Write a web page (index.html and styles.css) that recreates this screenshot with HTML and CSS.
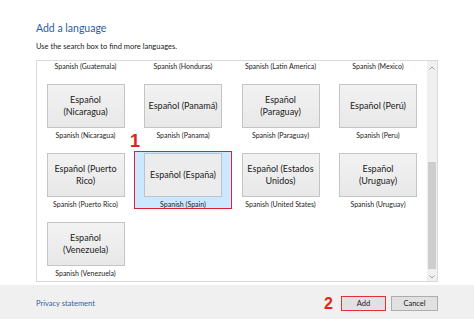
FILE: index.html
```html
<!DOCTYPE html>
<html>
<head>
<meta charset="utf-8">
<link rel="stylesheet" href="styles.css">
</head>
<body>
<div class="dialog">
  <header class="head">
    <h1 class="title">Add a language</h1>
    <p class="hint">Use the search box to find more languages.</p>
  </header>
  <div class="listbox">
    <div class="list">
      <div class="grid">
        <div class="cell prev"><span class="label">Spanish (Guatemala)</span></div>
        <div class="cell prev"><span class="label">Spanish (Honduras)</span></div>
        <div class="cell prev"><span class="label">Spanish (Latin America)</span></div>
        <div class="cell prev"><span class="label">Spanish (Mexico)</span></div>

        <div class="cell"><div class="tile">Español<br>(Nicaragua)</div><span class="label">Spanish (Nicaragua)</span></div>
        <div class="cell"><div class="tile">Español (Panamá)</div><span class="label">Spanish (Panama)</span></div>
        <div class="cell"><div class="tile">Español<br>(Paraguay)</div><span class="label">Spanish (Paraguay)</span></div>
        <div class="cell"><div class="tile">Español (Perú)</div><span class="label">Spanish (Peru)</span></div>

        <div class="cell"><div class="tile">Español (Puerto<br>Rico)</div><span class="label">Spanish (Puerto Rico)</span></div>
        <div class="cell selected"><div class="tile">Español (España)</div><span class="label">Spanish (Spain)</span></div>
        <div class="cell"><div class="tile">Español (Estados<br>Unidos)</div><span class="label">Spanish (United States)</span></div>
        <div class="cell"><div class="tile">Español<br>(Uruguay)</div><span class="label">Spanish (Uruguay)</span></div>

        <div class="cell"><div class="tile">Español<br>(Venezuela)</div><span class="label">Spanish (Venezuela)</span></div>
      </div>
      <span class="mark mark-one">1</span>
    </div>
    <div class="scrollbar">
      <span class="arrow">
        <svg width="6" height="4" viewBox="0 0 6 4"><path d="M0.5 3.5 L3 1 L5.5 3.5" fill="none" stroke="#a0a0a0" stroke-width="1"/></svg>
      </span>
      <div class="track"><div class="thumb"></div></div>
      <span class="arrow">
        <svg width="6" height="4" viewBox="0 0 6 4"><path d="M0.5 0.5 L3 3 L5.5 0.5" fill="none" stroke="#a0a0a0" stroke-width="1"/></svg>
      </span>
    </div>
  </div>
  <footer class="foot">
    <a class="privacy">Privacy statement</a>
    <div class="actions">
      <span class="mark mark-two">2</span>
      <button class="btn btn-add">Add</button>
      <button class="btn btn-cancel">Cancel</button>
    </div>
  </footer>
</div>
</body>
</html>
```

FILE: styles.css
```css
* { box-sizing: border-box; }
html, body { margin: 0; padding: 0; background: #ffffff; }
body {
  width: 474px;
  height: 319px;
  overflow: hidden;
  font-family: Lato, "Noto Sans", sans-serif;
  color: #1a1a1a;
}
.dialog {
  display: flex;
  flex-direction: column;
  height: 319px;
}
.head {
  padding: 19px 36px 0;
}
.title {
  margin: 0;
  font-size: 10.5px;
  line-height: 18px;
  font-weight: 400;
  color: #2a5ca6;
}
.hint {
  margin: 4px 0 0;
  font-size: 7.5px;
  line-height: 12px;
  color: #1a1a1a;
}
.listbox {
  margin: 7px 36px 0;
  height: 222px;
  border: 1px solid #dadada;
  display: flex;
  background: #fff;
}
.list {
  flex: 1;
  position: relative;
  overflow: hidden;
}
.grid {
  display: grid;
  grid-template-columns: 97px 98px 97px 98px;
  grid-template-rows: 10px;
  grid-auto-rows: 58px;
  row-gap: 11px;
}
.cell {
  display: flex;
  flex-direction: column;
  align-items: center;
  padding: 1px 0 0;
  border: 1px solid transparent;
}
.cell.prev {
  padding: 0;
  border: 0;
}
.tile {
  width: 78px;
  height: 44px;
  flex: none;
  display: flex;
  align-items: center;
  justify-content: center;
  text-align: center;
  font-size: 9px;
  line-height: 12px;
  color: #222;
  background: linear-gradient(#f2f2f2, #e8e8e8);
  border: 1px solid #c4c4c4;
}
.label {
  margin-top: 2px;
  font-size: 7px;
  line-height: 10px;
  white-space: nowrap;
  color: #222;
}
.cell.prev .label { margin-top: 0; }
.cell.selected {
  background: #cce8ff;
  border: 1px solid #d8242f;
}
.cell.selected .tile {
  background: #ececec;
  border-color: #b8c4cf;
}
.mark {
  font-family: "Liberation Sans", Arial, sans-serif;
  font-weight: 700;
  color: #e2231a;
}
.mark-one {
  position: absolute;
  left: 93px;
  top: 71px;
  font-size: 18px;
  line-height: 18px;
}
.scrollbar {
  width: 10px;
  background: #f0f0f0;
  display: flex;
  flex-direction: column;
  align-items: center;
}
.arrow {
  height: 11px;
  display: flex;
  align-items: center;
  justify-content: center;
  padding-top: 3px;
}
.track {
  flex: 1;
  width: 100%;
  display: flex;
  flex-direction: column;
  justify-content: flex-end;
  padding: 0 1px 1px;
}
.thumb {
  height: 107px;
  background: #cdcdcd;
}
.foot {
  margin-top: 3px;
  flex: 1;
  background: #f0f0f0;
  display: flex;
  align-items: center;
  justify-content: space-between;
  padding: 3px 36px 0;
}
.privacy {
  font-size: 7.5px;
  color: #2f5fa5;
  text-decoration: none;
}
.actions {
  display: flex;
  align-items: center;
}
.mark-two {
  font-size: 16px;
  line-height: 16px;
  margin-right: 8px;
}
.btn {
  font-family: Lato, "Noto Sans", sans-serif;
  font-size: 7.5px;
  height: 15px;
  padding: 0;
  background: #e1e1e1;
  border: 1px solid #adadad;
  color: #1a1a1a;
}
.btn-add {
  width: 45px;
  border-color: #e0303a;
  margin-right: 5px;
}
.btn-cancel {
  width: 47px;
}
```
